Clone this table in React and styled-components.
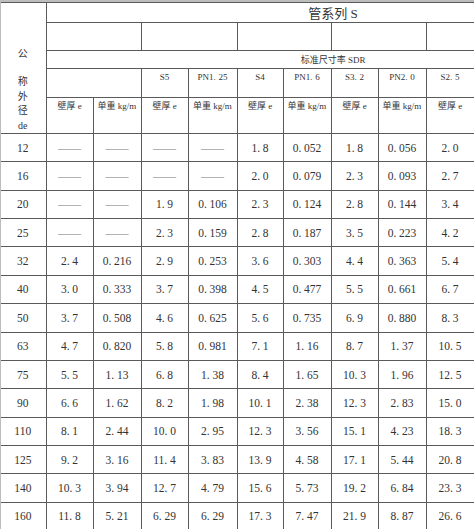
import React from "react";
import styled, { createGlobalStyle } from "styled-components";

const GlobalStyle = createGlobalStyle`
  html, body {
    margin: 0;
    padding: 0;
    background: #ffffff;
    overflow: hidden;
  }
  body {
    font-family: "Liberation Serif", "Noto Sans CJK SC", serif;
    color: #333333;
  }
`;

const Page = styled.div`
  width: 474px;
  height: 529px;
  overflow: hidden;
  border-top: 2px solid #bdbdbd;
  border-left: 1px solid #bdbdbd;
  box-sizing: border-box;
`;

const Table = styled.table`
  border-collapse: collapse;
  table-layout: fixed;
  width: 620px;
  margin-left: -1px;
  border-bottom: 2px solid #4a4a4a;
`;

const Cell = styled.td`
  border: 1px solid #5a5a5a;
  padding: 0;
  text-align: center;
  vertical-align: ${(p) => p.$valign || "middle"};
  font-size: ${(p) => p.$size || 11.5}px;
  color: #333;
  white-space: nowrap;
  overflow: hidden;
`;

const SideHead = styled(Cell)`
  border-left: none;
  vertical-align: bottom;
  font-size: 10px;
  line-height: 14.4px;
`;

const SizeCell = styled(Cell)`
  border-left: none;
`;

const HeadRow = styled.tr`
  height: ${(p) => p.$h}px;
`;

const DataRow = styled.tr`
  height: 28.36px;
`;

const TopLabel = styled.div`
  padding-top: 3px;
  font-size: 9px;
  line-height: 11px;
`;

const Dot = styled.span`
  margin-right: 2.8px;
`;

const Dash = styled.span`
  color: #777;
`;

const widths = [46, 47, 48, 47, 49, 46, 48, 47, 48, 48, 48, 48, 50];

const grades = ["S5", "PN1.25", "S4", "PN1.6", "S3.2", "PN2.0", "S2.5", "", "", ""];

const rows = [
  ["12", "-", "-", "-", "-", "1.8", "0.052", "1.8", "0.056", "2.0"],
  ["16", "-", "-", "-", "-", "2.0", "0.079", "2.3", "0.093", "2.7"],
  ["20", "-", "-", "1.9", "0.106", "2.3", "0.124", "2.8", "0.144", "3.4"],
  ["25", "-", "-", "2.3", "0.159", "2.8", "0.187", "3.5", "0.223", "4.2"],
  ["32", "2.4", "0.216", "2.9", "0.253", "3.6", "0.303", "4.4", "0.363", "5.4"],
  ["40", "3.0", "0.333", "3.7", "0.398", "4.5", "0.477", "5.5", "0.661", "6.7"],
  ["50", "3.7", "0.508", "4.6", "0.625", "5.6", "0.735", "6.9", "0.880", "8.3"],
  ["63", "4.7", "0.820", "5.8", "0.981", "7.1", "1.16", "8.7", "1.37", "10.5"],
  ["75", "5.5", "1.13", "6.8", "1.38", "8.4", "1.65", "10.3", "1.96", "12.5"],
  ["90", "6.6", "1.62", "8.2", "1.98", "10.1", "2.38", "12.3", "2.83", "15.0"],
  ["110", "8.1", "2.44", "10.0", "2.95", "12.3", "3.56", "15.1", "4.23", "18.3"],
  ["125", "9.2", "3.16", "11.4", "3.83", "13.9", "4.58", "17.1", "5.44", "20.8"],
  ["140", "10.3", "3.94", "12.7", "4.79", "15.6", "5.73", "19.2", "6.84", "23.3"],
  ["160", "11.8", "5.21", "6.29", "6.29", "17.3", "7.47", "21.9", "8.87", "26.6"],
];

// numbers are printed with a wide period, like "0. 052"
function Num({ value }) {
  if (!value) return null;
  if (value === "-") return <Dash>——</Dash>;
  const i = value.indexOf(".");
  if (i < 0) return <>{value}</>;
  return (
    <>
      {value.slice(0, i)}
      <Dot>.</Dot>
      {value.slice(i + 1)}
    </>
  );
}

export default function App() {
  return (
    <>
      <GlobalStyle />
      <Page>
        <Table>
          <colgroup>
            {widths.map((w, i) => (
              <col key={i} style={{ width: w }} />
            ))}
          </colgroup>
          <tbody>
            <HeadRow $h={17}>
              <SideHead rowSpan={5}>
                公<br />
                <br />
                称<br />
                外<br />
                径<br />
                de
              </SideHead>
              <Cell colSpan={12} $size={13}>
                管系列 S
              </Cell>
            </HeadRow>
            <HeadRow $h={28}>
              {[0, 1, 2, 3, 4, 5].map((i) => (
                <Cell key={i} colSpan={2} />
              ))}
            </HeadRow>
            <HeadRow $h={18}>
              <Cell colSpan={12} $size={9}>
                标准尺寸率 SDR
              </Cell>
            </HeadRow>
            <HeadRow $h={29}>
              <Cell colSpan={2} />
              {grades.map((g, i) => (
                <Cell key={i} $valign="top">
                  <TopLabel>
                    <Num value={g} />
                  </TopLabel>
                </Cell>
              ))}
            </HeadRow>
            <HeadRow $h={36}>
              {[...Array(12)].map((_, i) => (
                <Cell key={i} $valign="top">
                  {i < 9 && (
                    <TopLabel>{i % 2 === 0 ? "壁厚 e" : "单重 kg/m"}</TopLabel>
                  )}
                </Cell>
              ))}
            </HeadRow>
            {rows.map((r) => (
              <DataRow key={r[0]}>
                <SizeCell>{r[0]}</SizeCell>
                {r.slice(1).map((v, i) => (
                  <Cell key={i}>
                    <Num value={v} />
                  </Cell>
                ))}
                <Cell />
                <Cell />
                <Cell />
              </DataRow>
            ))}
          </tbody>
        </Table>
      </Page>
    </>
  );
}
